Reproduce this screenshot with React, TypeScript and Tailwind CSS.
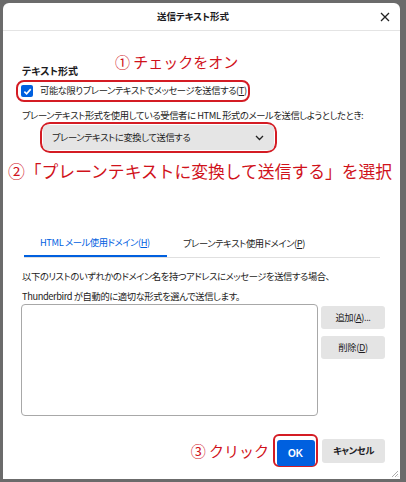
import React from 'react'

const jp = "font-['Noto_Sans_CJK_JP','Noto_Sans',sans-serif] [font-feature-settings:'palt']"
const note = "font-['Noto_Sans_CJK_JP','Noto_Sans',sans-serif] [font-feature-settings:normal] text-[#d0121b]"
const body = 'text-[9.3px] tracking-[-0.4px]'

function Check() {
  return (
    <span className="w-[12px] h-[12px] rounded-[2px] bg-[#0060df] flex items-center justify-center shrink-0">
      <svg width="9" height="9" viewBox="0 0 10 10">
        <path d="M1.5 5.2 L4 7.6 L8.6 2.4" stroke="white" strokeWidth="1.8" fill="none" />
      </svg>
    </span>
  )
}

export default function App() {
  return (
    <div className={`w-[406px] h-[482px] bg-[#6b6b6b] pt-[3px] pl-[3px] pr-[6px] pb-[3px] ${jp}`}>
      <div className="relative h-full bg-white rounded-t-[6px] flex flex-col text-[#1c1b22]">
        {/* header */}
        <div className="h-[28px] shrink-0 border-b border-[#e4e4e4] flex items-center pl-[19px] pr-[8px]">
          <div className="flex-1 text-center text-[9.5px] font-semibold pr-[16px]">送信テキスト形式</div>
          <svg width="10" height="10" viewBox="0 0 10 10" className="mr-[2px]">
            <path d="M1 1 L9 9 M9 1 L1 9" stroke="#222" strokeWidth="1.3" />
          </svg>
        </div>

        <div className="flex-1 flex flex-col pl-[19px] pr-[15px]">
          {/* section title + note 1 */}
          <div className="mt-[26px] h-[22px] flex items-end">
            <span className="text-[10px] font-semibold w-[93px] mb-[1px]">テキスト形式</span>
            <span className={`${note} text-[15px] leading-[22px] mb-[6px] whitespace-nowrap`}>① チェックをオン</span>
          </div>

          {/* checkbox */}
          <div className="-ml-[6px] mt-[1px] w-[234px] h-[22px] border-2 border-[#d41c24] rounded-[8px] flex items-center pl-[3px] gap-[7px]">
            <Check />
            <span className={`${body} whitespace-nowrap`}>
              可能な限りプレーンテキストでメッセージを送信する(<span className="underline">T</span>)
            </span>
          </div>

          <div className={`mt-[6px] ${body} leading-[14px] whitespace-nowrap`}>
            プレーンテキスト形式を使用している受信者に HTML 形式のメールを送信しようとしたとき:
          </div>

          {/* select */}
          <div className="ml-[18px] mt-[0px] w-[237px] h-[31px] border-[2.5px] border-[#d41c24] rounded-[10px] p-[1px]">
            <div className="h-full bg-[#e5e5e5] rounded-[4px] flex items-center pl-[9px] pr-[10px]">
              <span className={`flex-1 ${body}`}>プレーンテキストに変換して送信する</span>
              <svg width="9" height="6" viewBox="0 0 9 6">
                <path d="M1 1 L4.5 4.5 L8 1" stroke="#222" strokeWidth="1.3" fill="none" />
              </svg>
            </div>
          </div>

          <div className={`${note} -ml-[14px] mt-[7px] text-[16.8px] leading-[22px] whitespace-nowrap`}>
            ②「プレーンテキストに変換して送信する」を選択
          </div>

          {/* tabs */}
          <div className="mt-[48px] ml-[2px] mr-[5px] flex border-b border-[#e0e0e0]">
            <div className={`w-[143px] h-[27px] pl-[16px] flex items-center ${body} text-[#0060df] border-b-2 border-[#0060df] -mb-[1px] whitespace-nowrap`}>
              HTML メール使用ドメイン(<span className="underline">H</span>)
            </div>
            <div className={`pl-[16px] h-[27px] flex items-center ${body} whitespace-nowrap`}>
              プレーンテキスト使用ドメイン(<span className="underline">P</span>)
            </div>
          </div>

          <div className={`mt-[8px] ${body} leading-[20px] whitespace-nowrap`}>
            <div>以下のリストのいずれかのドメイン名を持つアドレスにメッセージを送信する場合、</div>
            <div>Thunderbird が自動的に適切な形式を選んで送信します。</div>
          </div>

          {/* list + buttons */}
          <div className="-mt-[2px] flex">
            <div className="-ml-[1px] w-[297px] h-[112px] border border-[#a8a8a8] rounded-[4px]" />
            <div className="ml-[3px] flex flex-col gap-[7px] mt-[2px]">
              <button className={`w-[64px] h-[23px] bg-[#e4e4e4] rounded-[3px] ${body}`}>
                追加(<span className="underline">A</span>)...
              </button>
              <button className={`w-[64px] h-[23px] bg-[#e4e4e4] rounded-[3px] ${body}`}>
                削除(<span className="underline">D</span>)
              </button>
            </div>
          </div>

          {/* footer */}
          <div className="mt-[18px] flex items-center justify-end">
            <span className={`${note} text-[15px] leading-[22px] mr-[4px] whitespace-nowrap`}>③ クリック</span>
            <div className="w-[45px] h-[33px] border-[2.5px] border-[#d41c24] rounded-[6px] p-[1.5px]">
              <button className="w-full h-full bg-[#0060df] rounded-[3px] text-white text-[10px] font-bold font-['Liberation_Sans',sans-serif]">
                OK
              </button>
            </div>
            <button className={`ml-[4px] w-[63px] h-[24px] bg-[#e4e4e4] rounded-[3px] ${body} font-semibold`}>
              キャンセル
            </button>
          </div>
        </div>

        {/* resize grip */}
        <svg width="8" height="8" viewBox="0 0 8 8" className="absolute right-[1px] bottom-[1px]">
          <path d="M7 1 L1 7 M7 4 L4 7 M7 6.5 L6.5 7" stroke="#999" strokeWidth="0.8" />
        </svg>
      </div>
    </div>
  )
}
